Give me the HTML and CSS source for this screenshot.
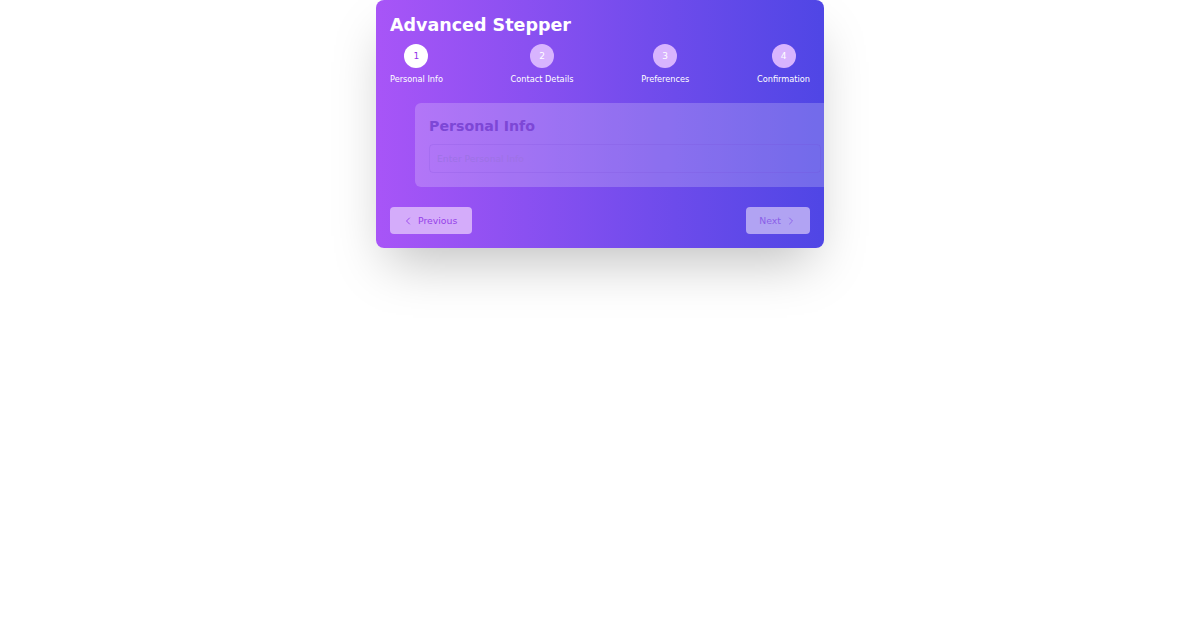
FILE: index.html
```html
<!DOCTYPE html>
<html lang="en">
<head>
<meta charset="utf-8">
<title>Advanced Stepper</title>
<link rel="stylesheet" href="styles.css">
</head>
<body>
<div class="card">
  <h1 class="title">Advanced Stepper</h1>
  <div class="steps">
    <div class="step">
      <div class="circle active">1</div>
      <div class="label">Personal Info</div>
    </div>
    <div class="step">
      <div class="circle">2</div>
      <div class="label">Contact Details</div>
    </div>
    <div class="step">
      <div class="circle">3</div>
      <div class="label">Preferences</div>
    </div>
    <div class="step">
      <div class="circle">4</div>
      <div class="label">Confirmation</div>
    </div>
  </div>
  <div class="viewport">
    <div class="panel">
      <h2 class="panel-title">Personal Info</h2>
      <div class="field"><span class="placeholder">Enter Personal Info</span></div>
    </div>
  </div>
  <div class="actions">
    <button class="btn btn-prev" type="button">
      <svg class="icon" viewBox="0 0 24 24" fill="none" stroke="currentColor" stroke-width="2" stroke-linecap="round" stroke-linejoin="round"><path d="M15 18l-6-6 6-6"/></svg>
      <span>Previous</span>
    </button>
    <button class="btn btn-next" type="button">
      <span>Next</span>
      <svg class="icon" viewBox="0 0 24 24" fill="none" stroke="currentColor" stroke-width="2" stroke-linecap="round" stroke-linejoin="round"><path d="M9 18l6-6-6-6"/></svg>
    </button>
  </div>
</div>
</body>
</html>
```

FILE: styles.css
```css
* { box-sizing: border-box; }
html, body { margin: 0; padding: 0; background: #ffffff; }
body {
  min-height: 100vh;
  font-family: "DejaVu Sans", "Noto Sans", sans-serif;
}

.card {
  width: 448px;
  margin: 0 auto;
  padding: 15px 14px 14px;
  border-radius: 8px;
  overflow: hidden;
  background: linear-gradient(to right, #a855f7, #4f46e5);
  box-shadow: 0 25px 50px -12px rgba(0, 0, 0, 0.25);
  color: #ffffff;
}

.title {
  margin: 0;
  font-size: 17.5px;
  line-height: 20px;
  font-weight: 700;
}

.steps {
  margin-top: 9px;
  display: flex;
  justify-content: space-between;
}
.step {
  display: flex;
  flex-direction: column;
  align-items: center;
}
.circle {
  width: 24px;
  height: 24px;
  border-radius: 50%;
  background: #d8b4fe;
  color: #ffffff;
  font-size: 9px;
  display: flex;
  align-items: center;
  justify-content: center;
}
.circle.active {
  background: #ffffff;
  color: #9333ea;
}
.label {
  margin-top: 5px;
  font-size: 8.2px;
  line-height: 13px;
  color: #ffffff;
  white-space: nowrap;
}

.viewport {
  margin-top: 17px;
}
.panel {
  width: 100%;
  transform: translateX(25px);
  padding: 13px 14px 14px;
  border-radius: 6px;
  background: rgba(255, 255, 255, 0.2);
}
.panel-title {
  margin: 0;
  font-size: 14.2px;
  line-height: 20px;
  font-weight: 700;
  color: #7d47d6;
}
.field {
  display: flex;
  align-items: center;
  width: 100%;
  height: 29px;
  margin-top: 8px;
  padding: 0 7px;
  border: 1px solid rgba(120, 70, 210, 0.16);
  border-radius: 4px;
}
.placeholder {
  font-size: 9.2px;
  font-weight: 400;
  line-height: 12px;
  color: #9e72e6;
  white-space: nowrap;
}

.actions {
  margin-top: 20px;
  display: flex;
  justify-content: space-between;
}
.btn {
  height: 27px;
  display: flex;
  align-items: center;
  gap: 4px;
  border: none;
  border-radius: 4px;
  font-family: inherit;
  font-size: 9.3px;
}
.btn-prev {
  padding: 0 15px 0 12px;
  background: #d4acfa;
  color: #9541e9;
}
.btn-next {
  padding: 0 13px 0 13px;
  background: #b1a3f3;
  color: #8a60e8;
}
.icon {
  width: 12px;
  height: 12px;
  stroke-width: 1.8;
}
```
